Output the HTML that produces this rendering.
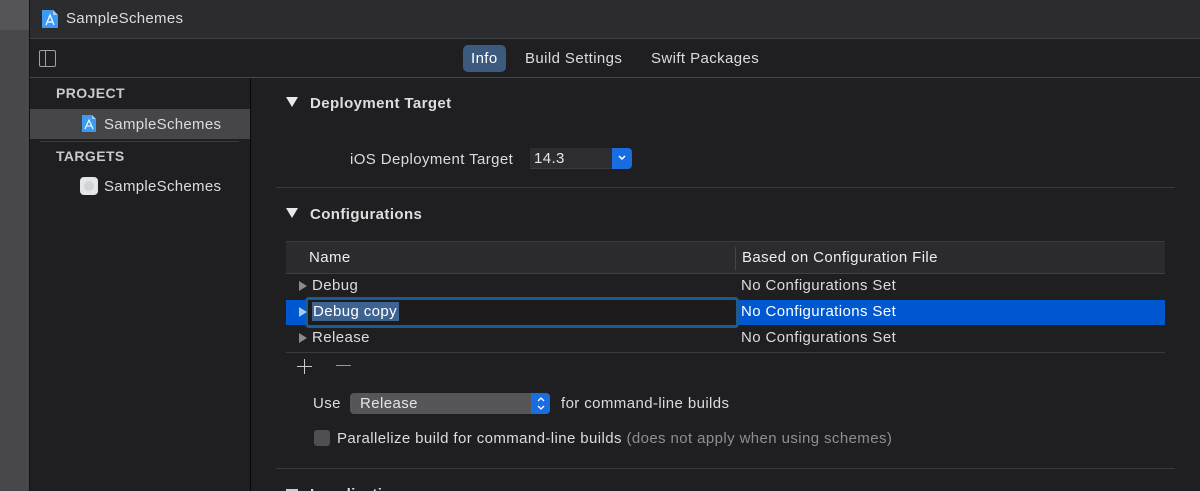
<!DOCTYPE html>
<html><head><meta charset="utf-8"><style>
*{margin:0;padding:0;box-sizing:border-box}
html,body{width:1200px;height:491px;overflow:hidden}
body{background:#1f1f22;font-family:"Liberation Sans",sans-serif;color:#dcdcdc;font-size:15px;letter-spacing:0.4px;position:relative}
.a{position:absolute;white-space:nowrap}
.b{font-weight:bold}
</style></head><body>
<div class="a" style="left:0;top:0;width:29px;height:30px;background:#555557"></div>
<div class="a" style="left:0;top:30px;width:29px;height:461px;background:#48484a"></div>
<div class="a" style="left:29px;top:0;width:1px;height:491px;background:#111"></div>
<div class="a" style="left:30px;top:0;width:1170px;height:38px;background:#2c2c2f"></div>
<div class="a" style="left:30px;top:38px;width:1170px;height:1px;background:#3f3f42"></div>
<div class="a" style="left:30px;top:39px;width:1170px;height:38px;background:#1f1f22"></div>
<div class="a" style="left:30px;top:77px;width:1170px;height:1px;background:#48484b"></div>
<svg class="a" style="left:41px;top:9px" width="18" height="20" viewBox="0 0 18 20"><path d="M1 1h11l5 5v13H1z" fill="#3c9af2"/><path d="M12 1v5h5" fill="#9ccdfb"/><path d="M5 16l4-10 4 10M6 13h6" stroke="#fff" stroke-width="1.2" fill="none"/></svg>
<div class="a" style="left:66px;top:10px;font-size:15px;letter-spacing:0.3px">SampleSchemes</div>
<div class="a" style="left:39px;top:50px;width:17px;height:17px;border:1.3px solid #a0a0a0;border-radius:2px"></div>
<div class="a" style="left:45px;top:51px;width:1.3px;height:15px;background:#a0a0a0"></div>
<div class="a" style="left:463px;top:45px;width:43px;height:27px;background:#3c5a7e;border-radius:5px"></div>
<div class="a" style="left:471px;top:50px;color:#fff">Info</div>
<div class="a" style="left:525px;top:50px">Build Settings</div>
<div class="a" style="left:651px;top:50px">Swift Packages</div>
<div class="a" style="left:250px;top:78px;width:1px;height:413px;background:#080808"></div>
<div class="a b" style="left:56px;top:85px;font-size:14px;color:#c9c9c9">PROJECT</div>
<div class="a" style="left:30px;top:109px;width:220px;height:30px;background:#464649"></div>
<svg class="a" style="left:81px;top:114px" width="16" height="19" viewBox="0 0 16 19"><path d="M1 1h10l4 4v13H1z" fill="#3c9af2"/><path d="M11 1v4h4" fill="#9ccdfb"/><path d="M4 15l4-9 4 9M5 12h6" stroke="#fff" stroke-width="1.1" fill="none"/></svg>
<div class="a" style="left:104px;top:116px;letter-spacing:0.3px">SampleSchemes</div>
<div class="a" style="left:40px;top:141px;width:199px;height:1px;background:#3a3a3d"></div>
<div class="a b" style="left:56px;top:148px;font-size:14px;color:#c9c9c9">TARGETS</div>
<div class="a" style="left:80px;top:177px;width:18px;height:18px;background:#e6e6e6;border-radius:4px"></div>
<div class="a" style="left:84px;top:181px;width:10px;height:10px;background:#cfd6d8;border-radius:50%"></div>
<div class="a" style="left:104px;top:178px;letter-spacing:0.3px">SampleSchemes</div>
<div class="a" style="left:286px;top:97px;width:0;height:0;border-left:6px solid transparent;border-right:6px solid transparent;border-top:10px solid #e8e8e8"></div>
<div class="a b" style="left:310px;top:95px;color:#dedede">Deployment Target</div>
<div class="a" style="left:350px;top:151px">iOS Deployment Target</div>
<div class="a" style="left:530px;top:148px;width:82px;height:21px;background:#2d2d30;border-bottom:1px solid #3a3a3c"></div>
<div class="a" style="left:534px;top:150px;color:#e6e6e6">14.3</div>
<div class="a" style="left:612px;top:148px;width:20px;height:21px;background:#1a6de0;border-radius:0 4px 4px 0"></div>
<svg class="a" style="left:616px;top:153px" width="12" height="10"><path d="M3 3l3 3 3-3" stroke="#fff" stroke-width="1.5" fill="none"/></svg>
<div class="a" style="left:276px;top:187px;width:899px;height:1px;background:#3a3a3d"></div>
<div class="a" style="left:286px;top:208px;width:0;height:0;border-left:6px solid transparent;border-right:6px solid transparent;border-top:10px solid #e8e8e8"></div>
<div class="a b" style="left:310px;top:206px;color:#dedede">Configurations</div>
<div class="a" style="left:286px;top:241px;width:879px;height:33px;background:#2b2b2e;border-top:1px solid #3a3a3d;border-bottom:1px solid #404043"></div>
<div class="a" style="left:735px;top:247px;width:1px;height:23px;background:#444"></div>
<div class="a" style="left:309px;top:249px;color:#eee">Name</div>
<div class="a" style="left:742px;top:249px;color:#eee">Based on Configuration File</div>
<div class="a" style="left:299px;top:281px;border-top:5px solid transparent;border-bottom:5px solid transparent;border-left:8px solid #8a8a8a"></div>
<div class="a" style="left:312px;top:277px">Debug</div>
<div class="a" style="left:741px;top:277px">No Configurations Set</div>
<div class="a" style="left:286px;top:300px;width:879px;height:25px;background:#0058d0"></div>
<div class="a" style="left:305px;top:297px;width:434px;height:31px;border:3px solid #1d5a92;border-radius:4px;background:#1d1b1b"></div>
<div class="a" style="left:299px;top:307px;border-top:5px solid transparent;border-bottom:5px solid transparent;border-left:8px solid #a9c9f0"></div>
<div class="a" style="left:312px;top:302px;height:19px;width:87px;background:#3f6390"></div>
<div class="a" style="left:313px;top:303px;color:#fff">Debug copy</div>
<div class="a" style="left:741px;top:303px;color:#fff">No Configurations Set</div>
<div class="a" style="left:299px;top:333px;border-top:5px solid transparent;border-bottom:5px solid transparent;border-left:8px solid #8a8a8a"></div>
<div class="a" style="left:312px;top:329px">Release</div>
<div class="a" style="left:741px;top:329px">No Configurations Set</div>
<div class="a" style="left:286px;top:352px;width:879px;height:1px;background:#3a3a3d"></div>
<div class="a" style="left:297px;top:366px;width:15px;height:1.3px;background:#ccc"></div>
<div class="a" style="left:304px;top:359px;width:1.3px;height:15px;background:#ccc"></div>
<div class="a" style="left:336px;top:365px;width:15px;height:1px;background:#999"></div>
<div class="a" style="left:313px;top:395px">Use</div>
<div class="a" style="left:350px;top:393px;width:200px;height:21px;background:#565658;border-radius:4px"></div>
<div class="a" style="left:360px;top:395px;color:#e6e6e6">Release</div>
<div class="a" style="left:531px;top:393px;width:19px;height:21px;background:#1a6de0;border-radius:0 4px 4px 0"></div>
<svg class="a" style="left:535px;top:395px" width="12" height="17"><path d="M3 6l3-3 3 3M3 11l3 3 3-3" stroke="#fff" stroke-width="1.3" fill="none"/></svg>
<div class="a" style="left:561px;top:395px">for command-line builds</div>
<div class="a" style="left:314px;top:430px;width:16px;height:16px;background:#4f4f52;border-radius:3px"></div>
<div class="a" style="left:337px;top:430px">Parallelize build for command-line builds <span style="color:#8f8f8f">(does not apply when using schemes)</span></div>
<div class="a" style="left:276px;top:468px;width:899px;height:1px;background:#3a3a3d"></div>
<div class="a" style="left:286px;top:489px;width:12px;height:4px;background:#ccc"></div>
<div class="a b" style="left:310px;top:486px;color:#dedede">Localizations</div>
</body></html>
